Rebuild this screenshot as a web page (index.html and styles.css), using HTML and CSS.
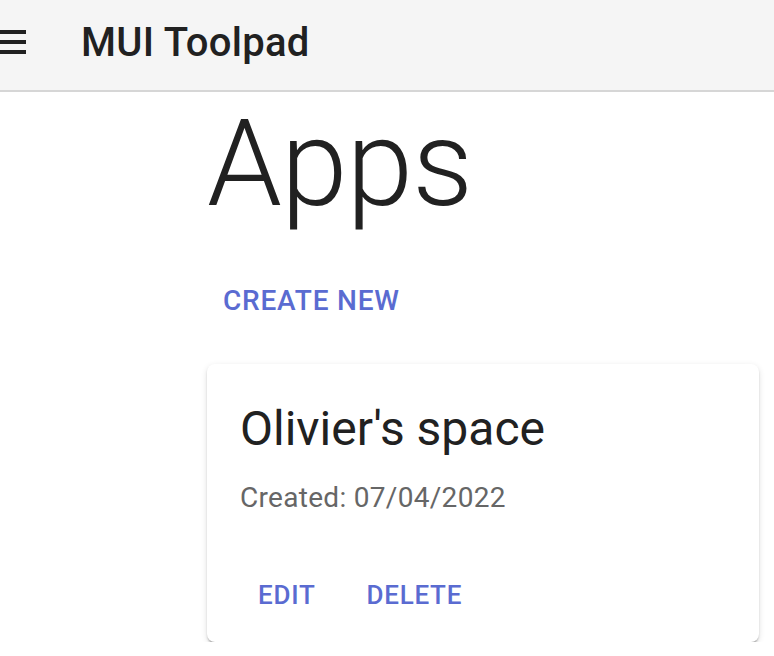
FILE: index.html
```html
<!DOCTYPE html>
<html lang="en">
<head>
  <meta charset="UTF-8">
  <meta name="viewport" content="width=device-width, initial-scale=1.0">
  <title>MUI Toolpad</title>
  <link rel="stylesheet" href="styles.css">
</head>
<body>
  <header class="topbar">
    <button class="menu-btn" aria-label="menu">
      <svg width="26" height="24" viewBox="0 0 26 24">
        <rect x="0" y="0" width="26" height="4" fill="#212121"/>
        <rect x="0" y="10" width="26" height="4" fill="#212121"/>
        <rect x="0" y="20" width="26" height="4" fill="#212121"/>
      </svg>
    </button>
    <div class="brand">MUI Toolpad</div>
  </header>

  <main class="content">
    <h2 class="page-title">Apps</h2>
    <div class="toolbar">
      <button class="text-btn">Create new</button>
    </div>

    <div class="card">
      <div class="card-body">
        <h5 class="card-title">Olivier's space</h5>
        <p class="card-meta">Created: 07/04/2022</p>
      </div>
      <div class="card-actions">
        <button class="text-btn small">Edit</button>
        <button class="text-btn small">Delete</button>
      </div>
    </div>
  </main>
</body>
</html>
```

FILE: styles.css
```css
body {
  margin: 0;
  font-family: Roboto, "Liberation Sans", sans-serif;
  color: #212121;
  background: #fff;
}
.topbar {
  display: flex;
  align-items: flex-start;
  height: 92px;
  box-sizing: border-box;
  background-color: #f5f5f5;
  border-bottom: 2px solid #d6d6d6;
}
.menu-btn {
  border: none;
  background: none;
  padding: 0;
  margin: 30px 0 0 0;
  width: 26px;
  height: 24px;
  display: block;
}
.menu-btn svg {
  display: block;
}
.brand {
  margin-left: 55px;
  padding-top: 11px;
  font-size: 40px;
  font-weight: 500;
  line-height: 64px;
  letter-spacing: 0.0075em;
}
.content {
  padding-left: 207px;
}
.page-title {
  margin: 0;
  font-size: 120px;
  font-weight: 300;
  line-height: 1.2;
  letter-spacing: -0.00833em;
}
.toolbar {
  margin-top: 28px;
}
.text-btn {
  border: none;
  background: none;
  font-family: inherit;
  font-size: 28px;
  font-weight: 500;
  line-height: 1.75;
  letter-spacing: 0.02857em;
  text-transform: uppercase;
  color: #5a6bd1;
  padding: 12px 16px;
  border-radius: 8px;
  cursor: pointer;
}
.text-btn.small {
  font-size: 26px;
  padding: 8px 10px;
}
.card {
  margin-top: 27px;
  width: 552px;
  background: #fff;
  border-radius: 8px;
  box-shadow: 0 4px 2px -2px rgba(0, 0, 0, 0.2), 0 2px 2px 0 rgba(0, 0, 0, 0.14), 0 2px 6px 0 rgba(0, 0, 0, 0.12);
}
.card-body {
  padding: 33px 32px 32px 33px;
}
.card-title {
  margin: 0 0 17px;
  font-size: 48px;
  font-weight: 400;
  line-height: 1.334;
}
.card-meta {
  margin: 0;
  font-size: 28px;
  line-height: 1.43;
  letter-spacing: 0.01071em;
  color: #666;
}
.card-actions {
  display: flex;
  gap: 31px;
  padding: 15px 16px 15px 41px;
}
```
